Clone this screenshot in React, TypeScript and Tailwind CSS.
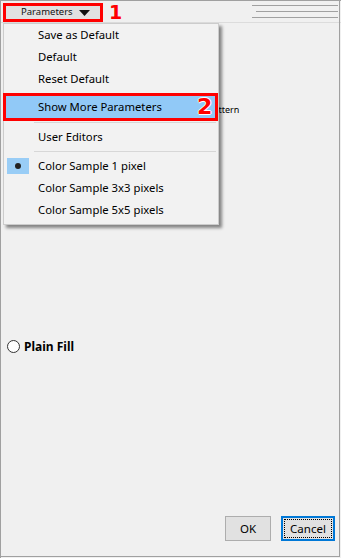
import * as React from "react";

const font = { fontFamily: '"Segoe UI", "Noto Sans", "Open Sans", sans-serif' };
const markFont = { fontFamily: '"DejaVu Sans", "Liberation Sans", Arial, sans-serif' };

type Entry = { label?: string; sep?: number; checked?: boolean; hot?: boolean };

const entries: Entry[] = [
  { label: "Save as Default" },
  { label: "Default" },
  { label: "Reset Default" },
  { sep: 6 },
  { label: "Show More Parameters", hot: true },
  { sep: 8 },
  { label: "User Editors" },
  { sep: 7 },
  { label: "Color Sample 1 pixel", checked: true },
  { label: "Color Sample 3x3 pixels" },
  { label: "Color Sample 5x5 pixels" },
];

const MenuRow: React.FC<{ entry: Entry }> = ({ entry }) => {
  if (entry.sep) {
    return (
      <div className="flex items-center pl-[30px] pr-[2px]" style={{ height: entry.sep }}>
        <div className="h-px w-full bg-[#d7d7d7]" />
      </div>
    );
  }
  return (
    <div
      className={`relative h-[22px] flex items-center ${entry.hot ? "bg-[#91c9f7] mx-[2px]" : ""}`}
    >
      {entry.checked && (
        <div className="absolute left-[3px] top-[3px] w-[22px] h-[16px] bg-[#99cdf6] flex items-center justify-center">
          <div className="w-[6px] h-[6px] rounded-full bg-[#222]" />
        </div>
      )}
      <span className={`text-[11.3px] text-black ${entry.hot ? "pl-[32px]" : "pl-[34px]"}`}>
        {entry.label}
      </span>
    </div>
  );
};

export default function App() {
  return (
    <div
      className="relative w-[341px] h-[558px] bg-[#f0f0f0] border-l border-t border-[#a0a0a0] overflow-hidden"
      style={font}
    >
      <div className="absolute right-[1px] top-0 bottom-[1px] w-px bg-[#a0a0a0]" />
      <div className="absolute left-0 right-[1px] bottom-[1px] h-px bg-[#a0a0a0]" />

      {/* Toolbar */}
      <div className="h-[22px] flex items-start border-b border-[#dcdcdc]">
        <div className="ml-[2px] mt-[2px] w-[100px] h-[19px] border-[3px] border-[#ff0000] bg-[#e1e1e1] flex items-center pl-[15px]">
          <span className="text-[9.5px] text-[#111]">Parameters</span>
          <svg width="11" height="6" viewBox="0 0 11 6" className="ml-[6px]">
            <path d="M0 0 H11 L5.5 6 Z" fill="#111" />
          </svg>
        </div>
        <span className="ml-[6px] mt-[1px] text-[19px] leading-[20px] font-bold text-[#ff0000]" style={markFont}>
          1
        </span>
        <div className="ml-auto mr-[3px] mt-[4px] flex flex-col items-end gap-[5px]">
          <div className="h-px w-[86px] bg-[#a0a0a0]" />
          <div className="h-px w-[82px] bg-[#a0a0a0]" />
          <div className="h-px w-[86px] bg-[#a0a0a0]" />
        </div>
      </div>

      {/* Content beneath menu */}
      <div className="relative h-[533px]">
        <div className="pt-[80px] pl-[207px] text-[9px] text-black">Pattern</div>
        <div className="mt-[221px] ml-[6px] flex items-center gap-[4px]">
          <div className="w-[13px] h-[13px] rounded-full border border-[#333] bg-white" />
          <span className="text-[12px] font-bold text-black">Plain Fill</span>
        </div>
        <div className="absolute right-[6px] bottom-[15px] flex gap-[10px]">
          <button className="w-[46px] h-[25px] border border-[#adadad] bg-[#e1e1e1] text-[11.5px] text-black">
            OK
          </button>
          <button className="w-[54px] h-[25px] border-2 border-[#0078d7] bg-[#e1e1e1] text-[11.5px] text-black p-px">
            <div className="w-full h-full border border-dotted border-black flex items-center justify-center">
              Cancel
            </div>
          </button>
        </div>
      </div>

      {/* Dropdown menu */}
      <div className="absolute left-[2px] top-[22px] w-[216px] bg-[#f2f2f2] border border-[#cccccc] shadow-[3px_3px_3px_rgba(0,0,0,0.45)] pb-[3px]">
        {entries.map((e, i) => (
          <MenuRow key={i} entry={e} />
        ))}
      </div>

      {/* Annotation for step 2 */}
      <div className="absolute left-[2px] top-[92px] w-[215px] h-[28px] border-[3px] border-[#ff0000]" />
      <span
        className="absolute left-[196px] top-[95px] text-[22px] leading-[22px] font-bold text-[#ff0000]"
        style={{
          ...markFont,
          textShadow: "1px 0 0 #fff, -1px 0 0 #fff, 0 1px 0 #fff, 0 -1px 0 #fff",
        }}
      >
        2
      </span>
    </div>
  );
}
